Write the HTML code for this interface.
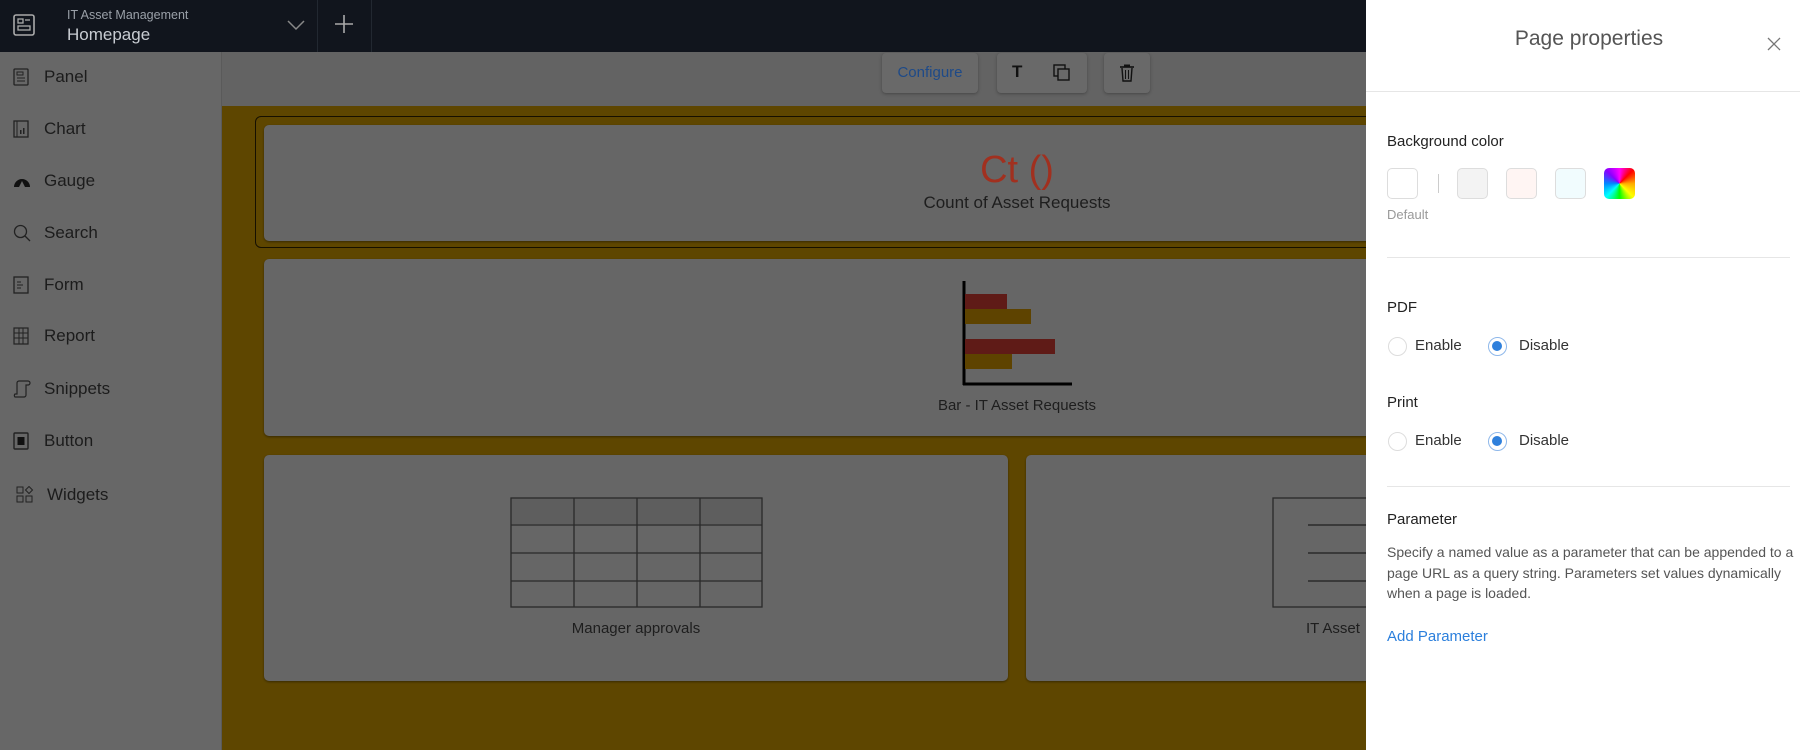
<!DOCTYPE html>
<html><head><meta charset="utf-8"><style>
*{box-sizing:border-box;margin:0;padding:0}
body{width:1800px;height:750px;overflow:hidden;position:relative;font-family:"Liberation Sans",sans-serif;background:#636363}
.abs{position:absolute}
.top{left:0;top:0;width:1366px;height:52px;background:#11151d}
.side{left:0;top:52px;width:222px;height:698px;background:#676767;border-right:1px solid #5a5a5a}
.si{position:absolute;left:0;height:24px;display:flex;align-items:center;font-size:17px;color:#1c1c1c}
.si svg{position:absolute;left:13px}
.si span{position:absolute;left:44px}
.yellow{left:222px;top:106px;width:1144px;height:644px;background:#5e4600}
.card{position:absolute;background:#666;border-radius:5px;box-shadow:0 1px 2px rgba(0,0,0,.4)}
.btn{position:absolute;top:53px;height:40px;background:#696969;border-radius:4px;box-shadow:0 1px 3px rgba(0,0,0,.3)}
.panel{left:1366px;top:0;width:434px;height:750px;background:#fff}
.h{position:absolute;left:21px;font-size:15px;color:#222;font-weight:500}
.sw{position:absolute;top:168px;width:31px;height:31px;border-radius:5px;border:1px solid #ddd}
.rad{position:absolute;width:19px;height:19px;border-radius:50%;border:1px solid #ddd}
.rl{position:absolute;font-size:15px;color:#333}
.div{position:absolute;left:21px;right:10px;height:1px;background:#e6e6e6}
</style></head><body>
<div class="abs top">
  <svg class="abs" style="left:13px;top:14px" width="22" height="22" viewBox="0 0 22 22"><rect x="1" y="1" width="20" height="20" rx="2" fill="none" stroke="#aaa" stroke-width="1.6"/><rect x="5" y="5" width="5" height="4" fill="none" stroke="#aaa" stroke-width="1.3"/><line x1="12" y1="6" x2="17" y2="6" stroke="#aaa" stroke-width="1.3"/><rect x="5" y="12" width="12" height="4" fill="none" stroke="#aaa" stroke-width="1.3"/></svg>
  <div class="abs" style="left:67px;top:8px;font-size:12.5px;color:#9aa0a8">IT Asset Management</div>
  <div class="abs" style="left:67px;top:25px;font-size:17px;color:#c8ccd2">Homepage</div>
  <svg class="abs" style="left:287px;top:19px" width="18" height="12"><polyline points="1,2 9,10 17,2" fill="none" stroke="#888" stroke-width="1.5"/></svg>
  <div class="abs" style="left:317px;top:0;width:1px;height:52px;background:#222831"></div>
  <svg class="abs" style="left:334px;top:14px" width="20" height="20"><line x1="10" y1="1" x2="10" y2="19" stroke="#aaa" stroke-width="1.6"/><line x1="1" y1="10" x2="19" y2="10" stroke="#aaa" stroke-width="1.6"/></svg>
  <div class="abs" style="left:371px;top:0;width:1px;height:52px;background:#222831"></div>
</div>
<div class="abs side">
  <div class="si" style="top:13px"><svg width="16" height="18"><rect x="1" y="1" width="14" height="16" rx="1" fill="none" stroke="#222" stroke-width="1.3"/><rect x="4" y="4" width="6" height="3" fill="none" stroke="#222"/><line x1="4" y1="10" x2="12" y2="10" stroke="#222"/><line x1="4" y1="13" x2="12" y2="13" stroke="#222"/></svg><span>Panel</span></div>
  <div class="si" style="top:65px"><svg width="16" height="18"><rect x="1" y="1" width="14" height="16" fill="none" stroke="#222" stroke-width="1.3"/><line x1="4" y1="1" x2="4" y2="17" stroke="#222"/><rect x="7" y="10" width="1.5" height="4" fill="#222"/><rect x="10" y="8" width="1.5" height="6" fill="#222"/></svg><span>Chart</span></div>
  <div class="si" style="top:117px"><svg width="18" height="14"><path d="M1 13 A8 8 0 0 1 17 13 L12 13 L9 7 L6 13 Z" fill="#111"/></svg><span>Gauge</span></div>
  <div class="si" style="top:169px"><svg width="18" height="18"><circle cx="7.5" cy="7.5" r="6" fill="none" stroke="#222" stroke-width="1.3"/><line x1="12" y1="12" x2="17" y2="17" stroke="#222" stroke-width="1.3"/></svg><span>Search</span></div>
  <div class="si" style="top:221px"><svg width="16" height="18"><rect x="1" y="1" width="14" height="16" fill="none" stroke="#222" stroke-width="1.3"/><line x1="4" y1="6" x2="8" y2="6" stroke="#222"/><line x1="4" y1="9" x2="10" y2="9" stroke="#222"/><line x1="4" y1="12" x2="8" y2="12" stroke="#222"/></svg><span>Form</span></div>
  <div class="si" style="top:272px"><svg width="16" height="18"><rect x="1" y="1" width="14" height="16" fill="none" stroke="#222" stroke-width="1.2"/><line x1="1" y1="6" x2="15" y2="6" stroke="#222"/><line x1="1" y1="11" x2="15" y2="11" stroke="#222"/><line x1="6" y1="1" x2="6" y2="17" stroke="#222"/><line x1="10" y1="1" x2="10" y2="17" stroke="#222"/></svg><span>Report</span></div>
  <div class="si" style="top:325px"><svg width="18" height="18"><path d="M4 14 V3 a2 2 0 0 1 2-2 h9 a2 2 0 0 1 0 4 h-2 v10 a2 2 0 0 1-2 2 H2 a2 2 0 0 1 0-3 z" fill="none" stroke="#222" stroke-width="1.2"/></svg><span>Snippets</span></div>
  <div class="si" style="top:377px"><svg width="16" height="18"><rect x="1" y="1" width="14" height="16" rx="1" fill="none" stroke="#222" stroke-width="1.4"/><rect x="4.5" y="5" width="7" height="8" fill="#111"/></svg><span>Button</span></div>
  <div class="si" style="top:431px"><svg width="20" height="18" style="left:16px"><rect x="1" y="1" width="6" height="6" fill="none" stroke="#222"/><rect x="1" y="10" width="6" height="6" fill="none" stroke="#222"/><rect x="10" y="10" width="6" height="6" fill="none" stroke="#222"/><path d="M13 0.5 L16.5 4 L13 7.5 L9.5 4 Z" fill="none" stroke="#222"/></svg><span style="left:47px">Widgets</span></div>
</div>
<div class="btn" style="left:882px;width:96px;font-size:15px;color:#1e4a88;line-height:40px;text-align:center">Configure</div>
<div class="btn" style="left:997px;width:90px"><div class="abs" style="left:15px;top:9px;font-weight:bold;font-size:17px;color:#111">T</div><svg class="abs" style="left:56px;top:11px" width="18" height="18"><rect x="1" y="1" width="11" height="11" fill="none" stroke="#111" stroke-width="1.4"/><rect x="5" y="5" width="11" height="11" fill="#696969" stroke="#111" stroke-width="1.4"/></svg></div>
<div class="btn" style="left:1104px;width:46px"><svg class="abs" style="left:15px;top:11px" width="16" height="18"><line x1="1" y1="3" x2="15" y2="3" stroke="#111" stroke-width="1.6"/><rect x="5" y="0.5" width="6" height="2.5" fill="#111"/><path d="M3 4 L4 17 H12 L13 4" fill="none" stroke="#111" stroke-width="1.4"/><line x1="6.5" y1="6" x2="6.5" y2="15" stroke="#111"/><line x1="9.5" y1="6" x2="9.5" y2="15" stroke="#111"/></svg></div>
<div class="abs yellow"></div>
<div class="abs" style="left:255px;top:116px;width:1200px;height:132px;border:1.5px solid #161000;border-radius:6px"></div>
<div class="card" style="left:264px;top:125px;width:1200px;height:116px">
  <div class="abs" style="left:697px;top:24px;width:112px;text-align:center;font-size:38px;color:#a1301f">Ct ()</div>
  <div class="abs" style="left:600px;top:68px;width:306px;text-align:center;font-size:17px;color:#1e1e1e">Count of Asset Requests</div>
</div>
<div class="card" style="left:264px;top:259px;width:1200px;height:177px">
  <svg class="abs" style="left:698px;top:22px" width="110" height="106"><line x1="2" y1="0" x2="2" y2="104" stroke="#000" stroke-width="3"/><line x1="1" y1="103" x2="110" y2="103" stroke="#000" stroke-width="3"/><rect x="3" y="13" width="42" height="15" fill="#5f1b17"/><rect x="3" y="28" width="66" height="15" fill="#5e4300"/><rect x="3" y="58" width="90" height="15" fill="#5f1b17"/><rect x="3" y="73" width="47" height="15" fill="#5e4300"/></svg>
  <div class="abs" style="left:600px;top:138px;width:306px;text-align:center;font-size:15px;color:#1e1e1e">Bar - IT Asset Requests</div>
</div>
<div class="card" style="left:264px;top:455px;width:744px;height:226px">
  <svg class="abs" style="left:246px;top:42px" width="253" height="112"><rect x="1" y="1" width="251" height="26" fill="#5e5e5e"/><g stroke="#2a2a2a" stroke-width="1.3" fill="none"><rect x="1" y="1" width="251" height="109"/><line x1="1" y1="28" x2="252" y2="28"/><line x1="1" y1="56" x2="252" y2="56"/><line x1="1" y1="84" x2="252" y2="84"/><line x1="64" y1="1" x2="64" y2="110"/><line x1="127" y1="1" x2="127" y2="110"/><line x1="190" y1="1" x2="190" y2="110"/></g></svg>
  <div class="abs" style="left:200px;top:165px;width:344px;text-align:center;font-size:15px;color:#1e1e1e">Manager approvals</div>
</div>
<div class="card" style="left:1026px;top:455px;width:400px;height:226px">
  <svg class="abs" style="left:246px;top:42px" width="100" height="112"><rect x="1" y="1" width="120" height="109" fill="none" stroke="#2a2a2a" stroke-width="1.3"/><g stroke="#2a2a2a" stroke-width="1.5"><line x1="36" y1="28" x2="100" y2="28"/><line x1="36" y1="56" x2="100" y2="56"/><line x1="36" y1="84" x2="100" y2="84"/></g></svg>
  <div class="abs" style="left:280px;top:165px;font-size:15px;color:#1e1e1e">IT Asset</div>
</div>
<div class="abs panel">
  <div class="abs" style="left:0;width:446px;top:27px;text-align:center;font-size:21px;color:#555">Page properties</div>
  <svg class="abs" style="left:401px;top:37px" width="14" height="14"><line x1="1" y1="1" x2="13" y2="13" stroke="#777" stroke-width="1.3"/><line x1="13" y1="1" x2="1" y2="13" stroke="#777" stroke-width="1.3"/></svg>
  <div class="abs" style="left:0;right:0;top:91px;height:1px;background:#e6e6e6"></div>
  <div class="h" style="top:133px">Background color</div>
  <div class="sw" style="left:21px"></div>
  <div class="abs" style="left:72px;top:174px;width:1px;height:19px;background:#ccc"></div>
  <div class="sw" style="left:91px;background:#f3f3f3"></div>
  <div class="sw" style="left:140px;background:#fff5f3"></div>
  <div class="sw" style="left:189px;background:#f1fcfe"></div>
  <div class="sw" style="left:238px;border:none;background:conic-gradient(from 0deg,#f0f,#f00,#fa0,#ff0,#0f0,#0ff,#08f,#80f,#f0f)"></div>
  <div class="abs" style="left:21px;top:207px;font-size:13px;color:#999">Default</div>
  <div class="div" style="top:257px"></div>
  <div class="h" style="top:299px">PDF</div>
  <div class="rad" style="left:22px;top:337px"></div><div class="rl" style="left:49px;top:337px">Enable</div>
  <div class="rad" style="left:122px;top:337px;border:1.5px solid #8fb8ea"><div class="abs" style="left:3px;top:3px;width:10px;height:10px;border-radius:50%;background:#2f80dc"></div></div><div class="rl" style="left:153px;top:337px">Disable</div>
  <div class="h" style="top:394px">Print</div>
  <div class="rad" style="left:22px;top:432px"></div><div class="rl" style="left:49px;top:432px">Enable</div>
  <div class="rad" style="left:122px;top:432px;border:1.5px solid #8fb8ea"><div class="abs" style="left:3px;top:3px;width:10px;height:10px;border-radius:50%;background:#2f80dc"></div></div><div class="rl" style="left:153px;top:432px">Disable</div>
  <div class="div" style="top:486px"></div>
  <div class="h" style="top:511px">Parameter</div>
  <div class="abs" style="left:21px;top:542px;width:410px;font-size:14px;line-height:20.5px;color:#555">Specify a named value as a parameter that can be appended to a page URL as a query string. Parameters set values dynamically when a page is loaded.</div>
  <div class="abs" style="left:21px;top:628px;font-size:15px;color:#2b7fdc">Add Parameter</div>
</div>
</body></html>
